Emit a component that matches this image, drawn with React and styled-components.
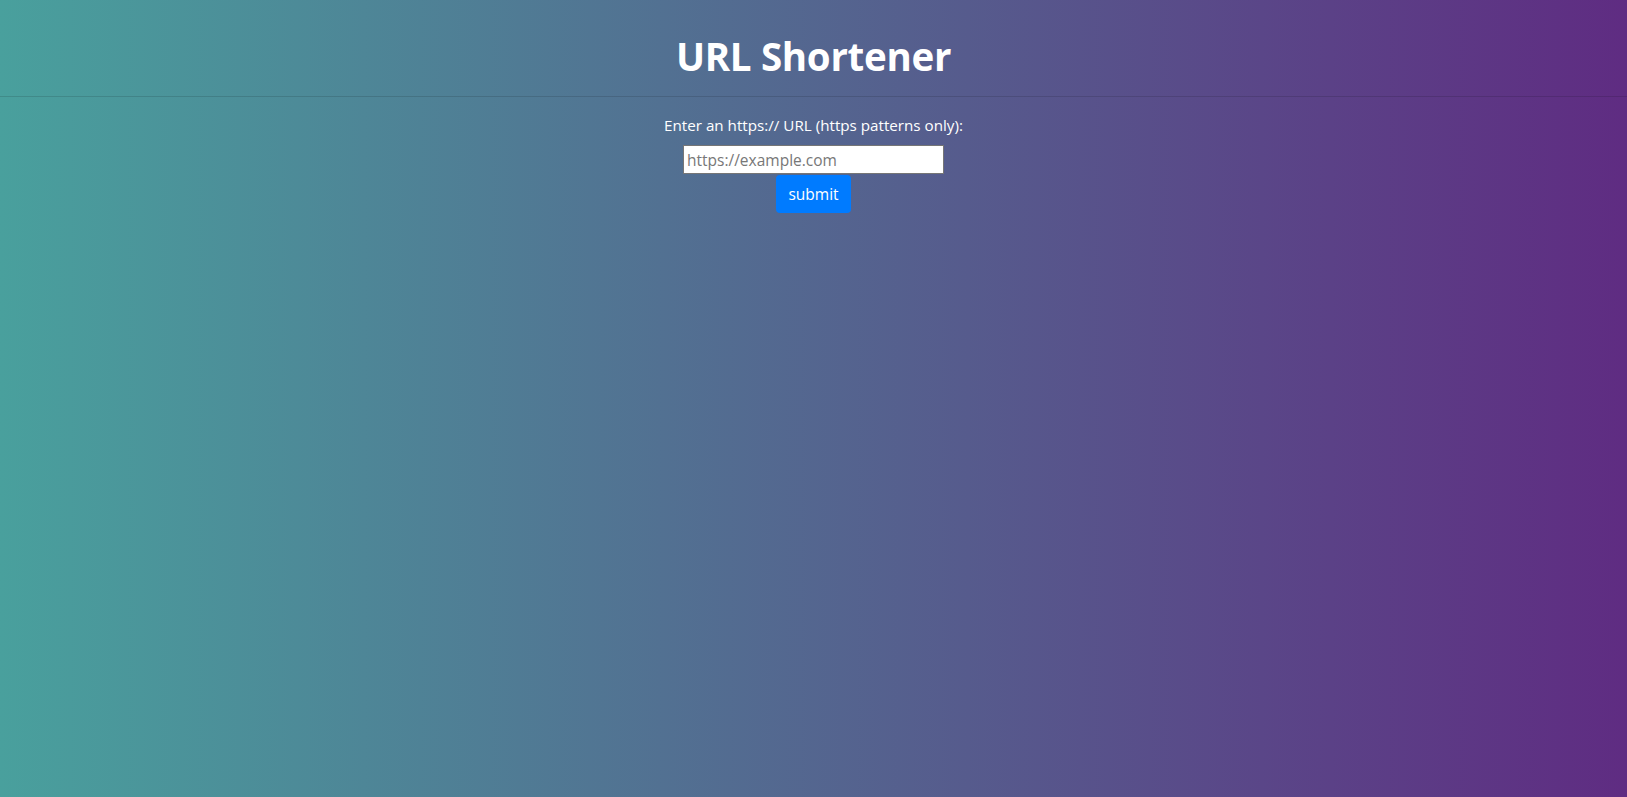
import React from "react";
import styled, { createGlobalStyle } from "styled-components";

const GlobalStyle = createGlobalStyle`
  html, body {
    margin: 0;
    padding: 0;
    height: 100%;
  }
  body {
    font-family: "Open Sans", "Noto Sans", sans-serif;
    background: linear-gradient(to right, #49a09d, #5f2c82);
    background-attachment: fixed;
    color: #fff;
  }
  #root {
    min-height: 100vh;
  }
`;

const Page = styled.div`
  min-height: 100vh;
  display: flex;
  flex-direction: column;
`;

const Header = styled.header`
  height: 96px;
  display: flex;
  align-items: center;
  justify-content: center;
  border-bottom: 1px solid rgba(0, 0, 0, 0.12);
`;

const Title = styled.h1`
  margin: 0;
  padding-top: 16px;
  font-size: 38.5px;
  font-weight: 700;
  letter-spacing: -0.3px;
  color: #fff;
`;

const Form = styled.form`
  display: flex;
  flex-direction: column;
  align-items: center;
  padding-top: 16px;
`;

const Label = styled.label`
  font-size: 15.2px;
  line-height: 24px;
  margin-bottom: 8px;
`;

const Input = styled.input`
  box-sizing: border-box;
  width: 261px;
  height: 29px;
  padding: 0 3px;
  border: 1px solid #767676;
  font-family: inherit;
  font-size: 15.5px;
  color: #222;
  background: #fff;
  outline: none;

  &::placeholder {
    color: #777;
  }
`;

const Button = styled.button`
  box-sizing: border-box;
  margin-top: 1px;
  height: 38px;
  padding: 0 12px;
  border: none;
  border-radius: 4px;
  background: #007bff;
  color: #fff;
  font-family: inherit;
  font-size: 15.5px;
  cursor: pointer;
`;

const App = () => {
  return (
    <>
      <GlobalStyle />
      <Page>
        <Header>
          <Title>URL Shortener</Title>
        </Header>
        <Form onSubmit={(e) => e.preventDefault()}>
          <Label htmlFor="url">Enter an https:// URL (https patterns only):</Label>
          <Input id="url" type="url" placeholder="https://example.com" />
          <Button type="submit">submit</Button>
        </Form>
      </Page>
    </>
  );
};

export default App;
